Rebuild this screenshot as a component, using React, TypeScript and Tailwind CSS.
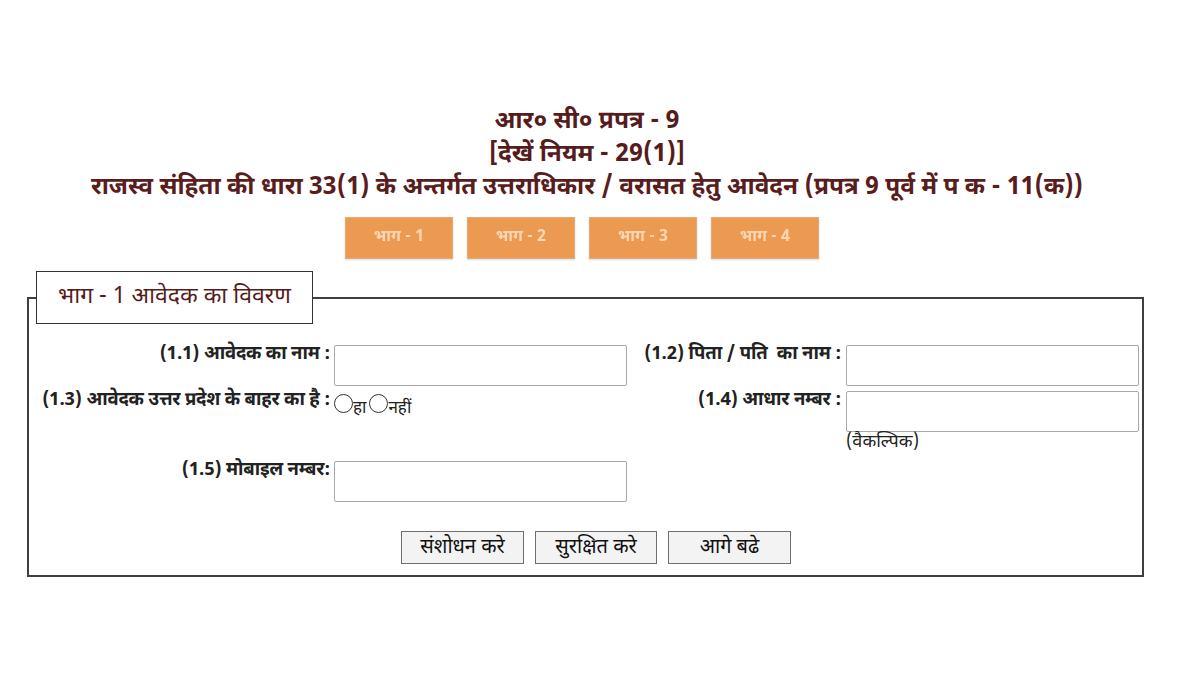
import React from "react";

const FONT = {
  fontFamily:
    '"Noto Sans Devanagari", "Noto Sans", "Lohit Devanagari", "Liberation Sans", sans-serif',
};

const tabs = ["भाग - 1", "भाग - 2", "भाग - 3", "भाग - 4"];

function Field() {
  return <input type="text" className="h-[41px] w-[293px] rounded-[2px] border border-[#a9a9a9] bg-white" />;
}

function Label({ text }: { text: string }) {
  return (
    <div className="whitespace-pre text-right text-[18.5px] font-bold leading-[20px] tracking-[-0.2px] text-[#222]">
      {text}
    </div>
  );
}

function Radio({ label }: { label: string }) {
  return (
    <label className="flex items-start">
      <span className="mt-[2px] block h-[19px] w-[19px] rounded-full border border-[#333] bg-white"></span>
      <span className="mt-[7px] text-[17px] leading-[20px] text-[#222]">{label}</span>
    </label>
  );
}

export default function App() {
  return (
    <div className="min-h-[675px] w-[1200px] bg-white" style={FONT}>
      {/* Heading */}
      <div className="pr-[26px] pt-[106px] text-center font-bold text-[#561c1c]">
        <div className="text-[24.5px] leading-[33px]">आर० सी० प्रपत्र - 9</div>
        <div className="text-[24.5px] leading-[33px]">[देखें नियम - 29(1)]</div>
        <div className="text-[24.4px] leading-[33px] text-[#5a1d1d]">
          राजस्व संहिता की धारा 33(1) के अन्तर्गत उत्तराधिकार / वरासत हेतु आवेदन (प्रपत्र 9 पूर्व में प क - 11(क))
        </div>
      </div>

      {/* Tabs */}
      <div className="mt-[12px] flex justify-start gap-[14px] pl-[345px]">
        {tabs.map((t) => (
          <button
            key={t}
            className="h-[42px] w-[108px] border border-[#e0ac78] bg-[#ec9a52] text-[16px] font-bold text-[#f9d7b4] shadow-[0_1px_2px_rgba(0,0,0,0.15)] blur-[0.4px]"
          >
            {t}
          </button>
        ))}
      </div>

      {/* Fieldset */}
      <fieldset className="ml-[27px] mt-[12px] w-[1117px] border-2 border-[#3f3f3f] pb-[11px]">
        <legend className="ml-[7px] border-[1.5px] border-[#333] bg-white px-[21px] text-[23px] leading-[51px] text-[#561c1c]">
          भाग - 1 आवेदक का विवरण
        </legend>

        <div className="mt-[21px] flex flex-col">
          {/* row 1 */}
          <div className="flex items-start">
            <div className="w-[303px] pr-[2px]">
              <Label text="(1.1) आवेदक का नाम :" />
            </div>
            <div className="ml-[2px]">
              <Field />
            </div>
            <div className="w-[216px] pr-[2px]">
              <Label text="(1.2) पिता / पति  का नाम :" />
            </div>
            <div className="ml-[3px]">
              <Field />
            </div>
          </div>

          {/* row 2 */}
          <div className="mt-[5px] flex items-start">
            <div className="w-[303px] pr-[2px]">
              <Label text="(1.3) आवेदक उत्तर प्रदेश के बाहर का है :" />
            </div>
            <div className="ml-[2px] flex w-[293px] items-start gap-[3px] pt-[1px]">
              <Radio label="हा" />
              <Radio label="नहीं" />
            </div>
            <div className="w-[216px] pr-[2px]">
              <Label text="(1.4) आधार नम्बर :" />
            </div>
            <div className="ml-[3px] flex flex-col">
              <Field />
              <span className="mt-[1px] text-[18px] leading-[19px] text-[#222]">(वैकल्पिक)</span>
            </div>
          </div>

          {/* row 3 */}
          <div className="mt-[9px] flex items-start">
            <div className="w-[303px] pr-[2px]">
              <Label text="(1.5) मोबाइल नम्बर:" />
            </div>
            <div className="ml-[2px]">
              <Field />
            </div>
          </div>

          {/* actions */}
          <div className="mt-[29px] flex gap-[11px] pl-[372px]">
            <button className="h-[33px] w-[123px] border border-[#6f6f6f] bg-[#f3f3f3] text-[20px] leading-[22px] text-[#111]">
              संशोधन करे
            </button>
            <button className="h-[33px] w-[122px] border border-[#6f6f6f] bg-[#f3f3f3] text-[20px] leading-[22px] text-[#111]">
              सुरक्षित करे
            </button>
            <button className="h-[33px] w-[123px] border border-[#6f6f6f] bg-[#f3f3f3] text-[20px] leading-[22px] text-[#111]">
              आगे बढे
            </button>
          </div>
        </div>
      </fieldset>
    </div>
  );
}
